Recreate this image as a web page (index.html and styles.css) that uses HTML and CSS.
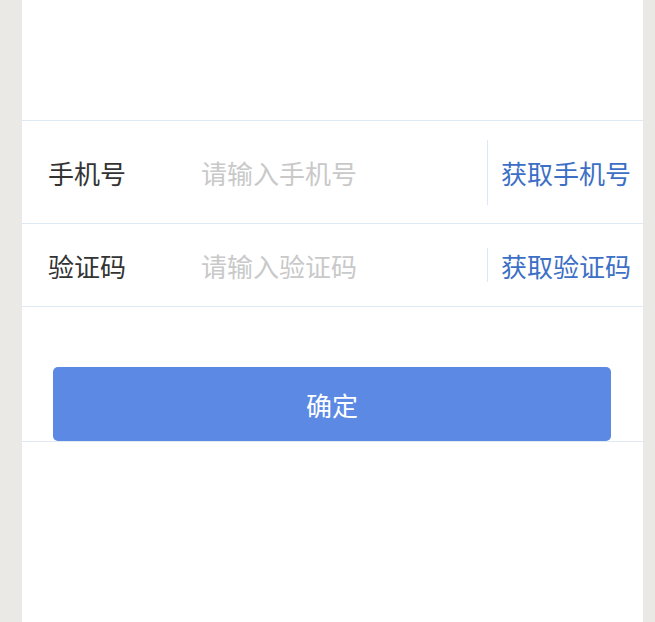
FILE: index.html
```html
<!DOCTYPE html>
<html lang="zh-CN">

<head>
    <meta charset="UTF-8">
    <meta name="viewport" content="width=device-width, initial-scale=1.0">
    <title>绑定手机号</title>
    <link rel="stylesheet" href="styles.css">
</head>

<body>
    <div class="page">
        <div class="form">
            <div class="row row-phone">
                <label class="label" for="phone">手机号</label>
                <input class="field" id="phone" type="text" placeholder="请输入手机号">
                <a class="action" href="#">获取手机号</a>
            </div>
            <div class="row row-code">
                <label class="label" for="code">验证码</label>
                <input class="field" id="code" type="text" placeholder="请输入验证码">
                <a class="action" href="#">获取验证码</a>
            </div>
        </div>
        <div class="submit-wrap">
            <button class="submit" type="button">确定</button>
        </div>
    </div>
</body>

</html>
```

FILE: styles.css
```css
body {
    font-family: "Noto Sans CJK SC", "Noto Sans", sans-serif;
    background-color: #ebe9e5;
    margin: 0;
    padding: 0 12px 0 22px;
}

.page {
    background-color: #ffffff;
    min-height: 622px;
    padding-top: 120px;
    box-sizing: border-box;
}

.form {
    border-top: 1px solid #dfe9f4;
}

.row {
    display: flex;
    align-items: center;
    border-bottom: 1px solid #dfe9f4;
    padding-left: 26px;
}

.row-phone {
    height: 102px;
}

.row-code {
    height: 82px;
}

.label {
    width: 153px;
    flex: none;
    font-size: 26px;
    color: #333333;
}

.field {
    flex: 1;
    min-width: 0;
    border: none;
    outline: none;
    padding: 0;
    font-family: inherit;
    font-size: 26px;
    color: #333333;
    background: transparent;
}

.field::placeholder {
    color: #c9c9c9;
}

.action {
    flex: none;
    display: flex;
    align-items: center;
    border-left: 1px solid #dce8f5;
    padding: 0 12px 0 13px;
    font-size: 26px;
    color: #3c6fc5;
    text-decoration: none;
}

.row-phone .action {
    height: 65px;
}

.row-code .action {
    height: 34px;
}

.submit-wrap {
    padding: 60px 32px 0 31px;
    border-bottom: 1px solid #dfe9f4;
}

.submit {
    display: block;
    width: 100%;
    height: 74px;
    border: none;
    border-radius: 5px;
    background-color: #5b89e3;
    color: #ffffff;
    font-family: inherit;
    font-size: 26px;
}
```
